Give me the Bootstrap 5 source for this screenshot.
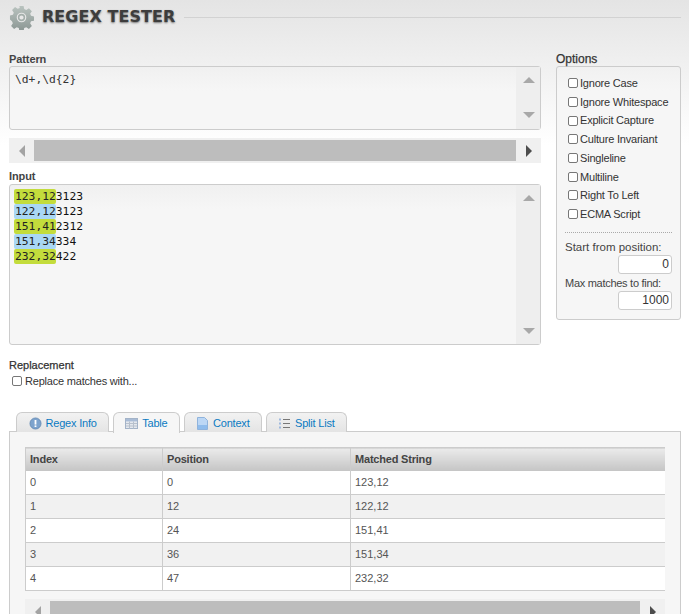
<!DOCTYPE html>
<html lang="en">
<head>
<meta charset="utf-8">
<title>Regex Tester</title>
<link href="https://cdn.jsdelivr.net/npm/bootstrap@5.3.0/dist/css/bootstrap.min.css" rel="stylesheet">
<style>
html,body{height:614px;overflow:hidden}
body{font-family:"Liberation Sans",Arial,sans-serif;font-size:11px;color:#444;background:#fff}
.page-wrap{height:614px;overflow:hidden;padding:0 8px 0 9px;background:linear-gradient(#e4e4e4 0,#fff 145px) no-repeat}
.head-row{height:34px;gap:8px}
.gear-ico{width:25px;height:25px;flex:none}
.head-title{font-family:"DejaVu Sans",sans-serif;font-weight:700;font-size:16px;letter-spacing:.05px;color:#3d3d3d;margin:0 1px 0 0;text-shadow:0 1px 2px rgba(0,0,0,.5);white-space:nowrap;line-height:34px}
.head-line{flex:1;height:1px;background:#d2d2d2}
.top-area{padding-top:18px;gap:15px}
.left-col{width:532px;flex:none}
.right-col{width:125px;flex:none}
.sec-label{font-weight:700;font-size:11px;letter-spacing:-.1px;color:#444;line-height:14px;height:14px}
.sec-label.plain{font-weight:400;font-size:12px;letter-spacing:0;color:#333;-webkit-text-stroke:.25px #333}
.sec-label.rep-lbl{font-size:11px}
.editor{position:relative;border:1px solid #ccc;border-radius:3px;background:linear-gradient(#f0f0f0 0,#f6f6f6 24px);font-family:"DejaVu Sans Mono",monospace;font-size:11.3px;line-height:15px;color:#333}
.pat-box{height:64px;padding:5px 5px}
.inp-box{height:161px;padding:4px 5px;color:#111;margin-top:1px}
.code-line{height:15px;white-space:pre}
.hit{border-radius:2px;color:#222;display:inline-block;height:15px;margin-left:-1px;padding-left:1px}
.hit-a{background:#c3dc3c}
.hit-b{background:#a9d7f5}
.vbar{position:absolute;top:0;right:0;bottom:0;width:24px;background:#eeeeee}
.arr{position:absolute;width:0;height:0}
.arr-up{border-left:6px solid transparent;border-right:6px solid transparent;border-bottom:6px solid #a8a8a8;left:7px}
.arr-dn{border-left:6px solid transparent;border-right:6px solid transparent;border-top:6px solid #a8a8a8;left:7px}
.arr-up-p{top:10px}
.arr-dn-p{top:45px}
.arr-dn-i{top:143px}
.hbar{height:25px;background:#f0f0f0;padding:2px 0;display:flex;align-items:stretch;margin:8px 0 6px}
.hbar-btn{width:25px;flex:none;display:flex;align-items:center;justify-content:center}
.hbar-thumb{flex:1;background:#bdbdbd}
.arr-l{border-top:6px solid transparent;border-bottom:6px solid transparent;border-right:6px solid #a3a3a3}
.arr-r{border-top:6px solid transparent;border-bottom:6px solid transparent;border-left:6px solid #4d4d4d}
.arr-l,.arr-r{position:static}
.opt-box{height:254px;border:1px solid #ccc;border-radius:3px;background:linear-gradient(#f1f1f1 0,#f6f6f6 24px);padding:7px 8px 0 11px}
.opt-item{display:flex;align-items:center;height:18.7px;color:#333;font-size:11px;letter-spacing:-.2px;white-space:nowrap;margin:0}
.chk{width:8px;height:8px;flex:none;border:1px solid #777;border-radius:2px;background:#fff;box-sizing:content-box;margin:0 2px 0 0;appearance:none;-webkit-appearance:none}
.opt-sep{border-top:1px dotted #aaa;margin:8px 0 7px -3px}
.num-lbl{color:#444;margin-left:-3px;line-height:14px;font-size:11.5px;white-space:nowrap}
.num-lbl.tight{font-size:11px;letter-spacing:-.28px}
.num-inp{display:block;margin:1px 0 2px auto;width:54px;height:19px;border:1px solid #ccc;border-radius:3px;background:#fff;font:12px "Liberation Sans",sans-serif;color:#333;text-align:right;padding:0 2px}
.rep-area{margin-top:13px;height:54px}
.rep-row{display:flex;align-items:center;padding-left:3px;height:16px;color:#333;font-size:11px;letter-spacing:-.2px;margin-top:1px}
.rep-row .chk{margin-right:3px}
.tab-row{display:flex;gap:3.5px;padding-left:7px;height:20px;position:relative;z-index:2;list-style:none;margin:0}
.tab-item{height:20px;border:1px solid #ccc;border-bottom:0;border-radius:6px 6px 0 0;background:linear-gradient(#f2f2f2,#e4e4e4);color:#0a7ac2;display:flex;align-items:center;font-size:11px;letter-spacing:-.2px;padding:1px 11.5px 0;gap:4px;white-space:nowrap}
.tab-item.on{height:21px;background:#f6f6f6;padding-bottom:1px}
.tab-ico{width:13px;height:13px;flex:none}
.tab-pane-box{border:1px solid #ccc;border-bottom:0;background:#f6f6f6;height:200px;padding:15px 15px 0;margin-top:-1px}
.res-tbl{width:640px;border-collapse:collapse;table-layout:fixed;font-size:11px;color:#555;background:#fff;margin:0}
.res-tbl col.c-a{width:137px}
.res-tbl col.c-b{width:188px}
.res-tbl th{height:23px;font-weight:700;font-size:11px;letter-spacing:-.2px;padding:0 4px;background:linear-gradient(#ebebeb,#c4c4c4);border:1px solid #ccc;border-bottom:0;color:#444}
.res-tbl td{height:24px;padding:0 4px;border:1px solid #ccc;border-top:0;background:#fff}
.res-tbl tr:nth-child(even) td{background:#f1f1f1}
.res-tbl th:last-child,.res-tbl td:last-child{border-right:0}
.tbl-bar{margin:8px 0 0;width:640px}
</style>
</head>
<body>
<div class="page-wrap">
  <div class="d-flex align-items-center head-row">
    <svg class="gear-ico" viewBox="0 0 26 26"><defs><linearGradient id="gg" x1="0" y1="0" x2="0" y2="1"><stop offset="0" stop-color="#b9c3bf"/><stop offset="1" stop-color="#8b9693"/></linearGradient></defs>
      <path fill="url(#gg)" fill-rule="evenodd" d="M10.8 1h4.4l.6 3.2 2.2.9 2.7-1.8 3.1 3.1-1.8 2.7.9 2.2 3.1.6v4.4l-3.1.6-.9 2.2 1.8 2.7-3.1 3.1-2.7-1.8-2.2.9-.6 3.1h-4.4l-.6-3.1-2.2-.9-2.7 1.8-3.1-3.1 1.8-2.7-.9-2.2L1 15.2v-4.4l3.1-.6.9-2.2-1.8-2.7 3.1-3.1 2.7 1.8 2.2-.9zM13 8a5 5 0 1 0 0 10 5 5 0 0 0 0-10z"/>
      <circle cx="13" cy="13" r="3" fill="none" stroke="#a3aeaa" stroke-width="1.6"/>
    </svg>
    <h1 class="head-title">REGEX TESTER</h1>
    <div class="head-line"></div>
  </div>

  <div class="d-flex top-area">
    <div class="left-col">
      <div class="sec-label">Pattern</div>
      <div class="editor pat-box">\d+,\d{2}
        <div class="vbar"><span class="arr arr-up arr-up-p"></span><span class="arr arr-dn arr-dn-p"></span></div>
      </div>
      <div class="hbar"><div class="hbar-btn"><span class="arr arr-l"></span></div><div class="hbar-thumb"></div><div class="hbar-btn"><span class="arr arr-r"></span></div></div>
      <div class="sec-label">Input</div>
      <div class="editor inp-box">
        <div class="code-line"><span class="hit hit-a">123,12</span>3123</div>
        <div class="code-line"><span class="hit hit-b">122,12</span>3123</div>
        <div class="code-line"><span class="hit hit-a">151,41</span>2312</div>
        <div class="code-line"><span class="hit hit-b">151,34</span>334</div>
        <div class="code-line"><span class="hit hit-a">232,32</span>422</div>
        <div class="vbar"><span class="arr arr-up arr-up-p"></span><span class="arr arr-dn arr-dn-i"></span></div>
      </div>
    </div>
    <div class="right-col">
      <div class="sec-label plain">Options</div>
      <div class="opt-box">
        <label class="opt-item"><input type="checkbox" class="chk">Ignore Case</label>
        <label class="opt-item"><input type="checkbox" class="chk">Ignore Whitespace</label>
        <label class="opt-item"><input type="checkbox" class="chk">Explicit Capture</label>
        <label class="opt-item"><input type="checkbox" class="chk">Culture Invariant</label>
        <label class="opt-item"><input type="checkbox" class="chk">Singleline</label>
        <label class="opt-item"><input type="checkbox" class="chk">Multiline</label>
        <label class="opt-item"><input type="checkbox" class="chk">Right To Left</label>
        <label class="opt-item"><input type="checkbox" class="chk">ECMA Script</label>
        <div class="opt-sep"></div>
        <div class="num-lbl">Start from position:</div>
        <input class="num-inp" value="0">
        <div class="num-lbl tight">Max matches to find:</div>
        <input class="num-inp" value="1000">
      </div>
    </div>
  </div>

  <div class="rep-area">
    <div class="sec-label plain rep-lbl">Replacement</div>
    <label class="rep-row"><input type="checkbox" class="chk">Replace matches with...</label>
  </div>

  <ul class="tab-row">
    <li class="tab-item"><svg class="tab-ico" viewBox="0 0 13 13"><circle cx="6.5" cy="6.5" r="5.5" fill="#7da3cd" stroke="#6a8fb8"/><rect x="5.6" y="3" width="1.8" height="4.6" fill="#fff"/><rect x="5.6" y="8.4" width="1.8" height="1.6" fill="#fff"/></svg>Regex Info</li>
    <li class="tab-item on"><svg class="tab-ico" viewBox="0 0 13 13"><rect x=".5" y="1.5" width="12" height="10" fill="#e4e8ee" stroke="#a3b3c8"/><rect x="1" y="2" width="11" height="2.4" fill="#a9bcd6"/><path d="M1 6.5h11M1 9h11M4.5 4.5v7M8.5 4.5v7" stroke="#b7c0cc" fill="none"/></svg>Table</li>
    <li class="tab-item"><svg class="tab-ico" viewBox="0 0 13 13"><path d="M1.5.5h7l3 3v9h-10z" fill="#bcd7f5" stroke="#8fb3dc"/><rect x="2" y="8" width="9" height="4" fill="#8fbcec"/></svg>Context</li>
    <li class="tab-item"><svg class="tab-ico" viewBox="0 0 13 13"><path d="M1 2.5h2M1 6.5h2M1 10.5h2" stroke="#9db8dd" stroke-width="2" fill="none"/><path d="M5 2.5h7M5 6.5h7M5 10.5h7" stroke="#777" stroke-width="1.2" fill="none"/></svg>Split List</li>
  </ul>
  <div class="tab-pane-box">
    <table class="res-tbl">
      <colgroup><col class="c-a"><col class="c-b"><col></colgroup>
      <thead><tr><th>Index</th><th>Position</th><th>Matched String</th></tr></thead>
      <tbody>
        <tr><td>0</td><td>0</td><td>123,12</td></tr>
        <tr><td>1</td><td>12</td><td>122,12</td></tr>
        <tr><td>2</td><td>24</td><td>151,41</td></tr>
        <tr><td>3</td><td>36</td><td>151,34</td></tr>
        <tr><td>4</td><td>47</td><td>232,32</td></tr>
      </tbody>
    </table>
    <div class="hbar tbl-bar"><div class="hbar-btn"><span class="arr arr-l"></span></div><div class="hbar-thumb"></div><div class="hbar-btn"><span class="arr arr-r"></span></div></div>
  </div>
</div>
<script src="https://cdn.jsdelivr.net/npm/bootstrap@5.3.0/dist/js/bootstrap.bundle.min.js"></script>
</body>
</html>
